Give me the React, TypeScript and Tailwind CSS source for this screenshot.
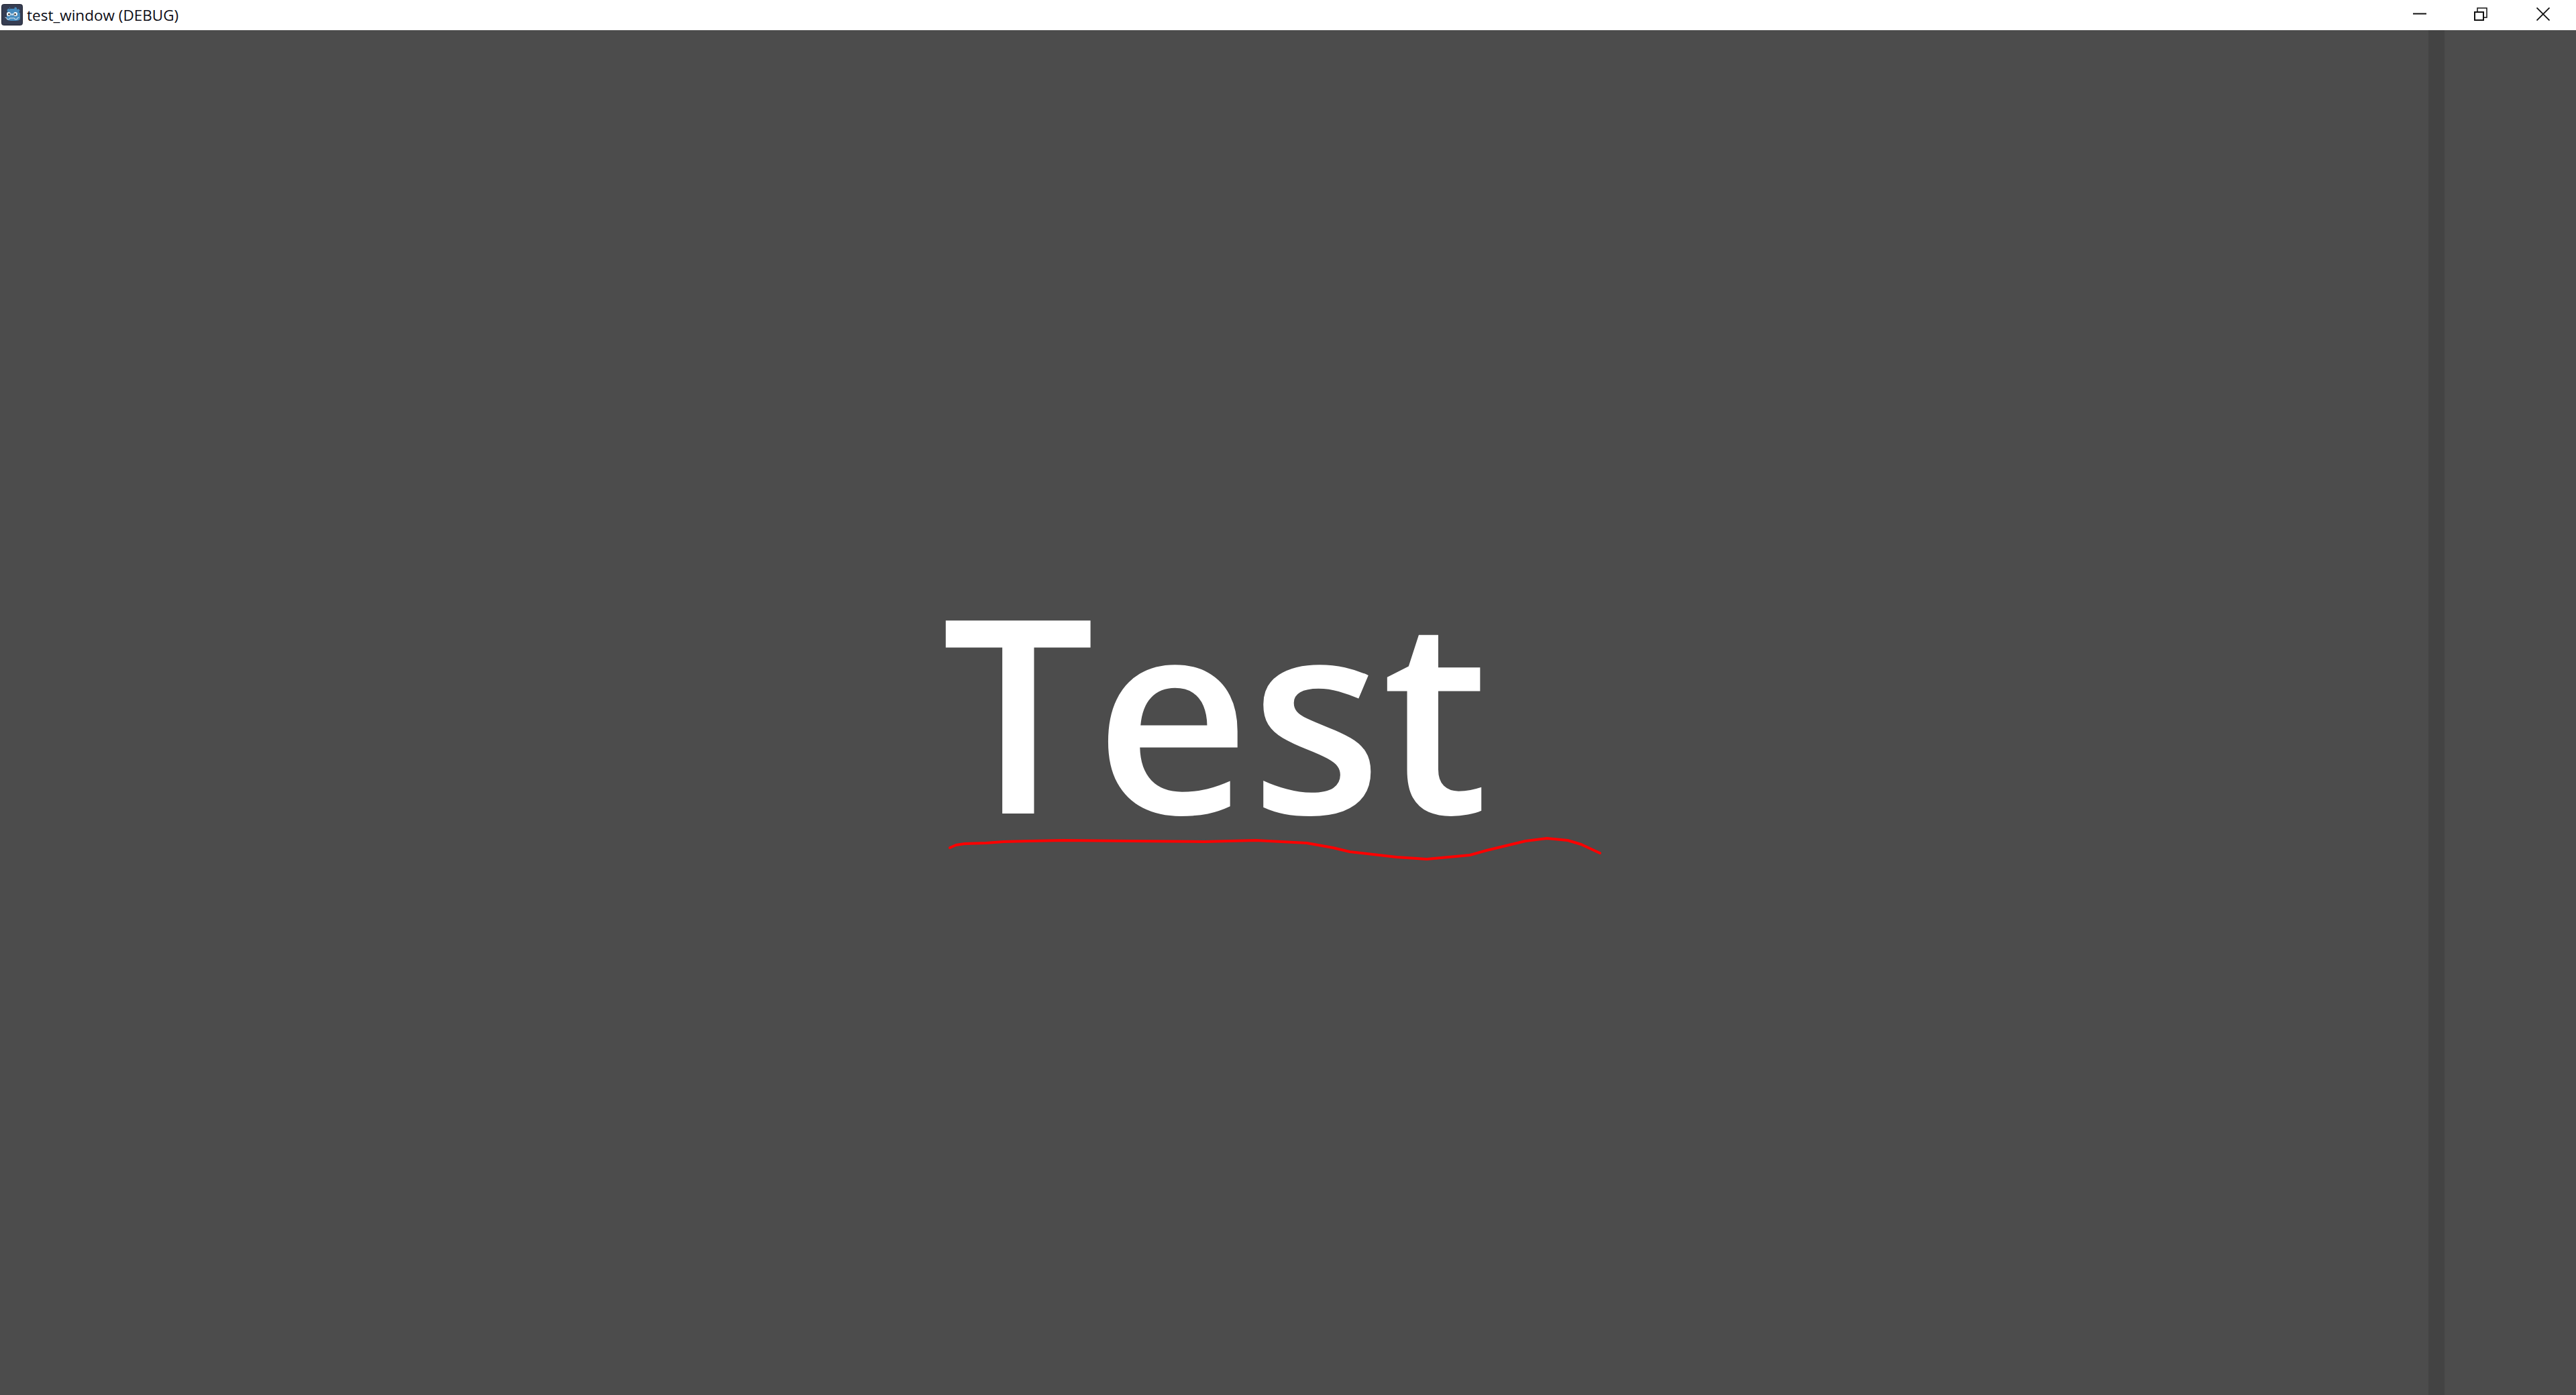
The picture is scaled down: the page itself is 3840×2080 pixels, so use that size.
const linePoints = [
  [1416, 1264], [1425, 1260], [1438, 1258], [1470, 1257], [1496, 1255], [1585, 1253],
  [1687, 1254], [1795, 1255], [1872, 1253], [1948, 1257], [1987, 1264], [2012, 1270],
  [2082, 1278], [2127, 1281], [2191, 1275], [2216, 1268], [2274, 1254], [2306, 1250],
  [2337, 1253], [2357, 1259], [2385, 1272],
];

function GodotIcon() {
  return (
    <svg width="32" height="32" viewBox="0 0 32 32" className="shrink-0">
      <rect x="0.5" y="0.5" width="31" height="31" rx="3" fill="#363d52" stroke="#212532" strokeWidth="1" />
      <path
        d="M12 4.500l.7 2.500h6.600l.7-2.500 3 1 .3 2.700 2.500-1 2 2.500-1.500 2.300 1.700 1.500V21q0 3-3 3.500q-7 1-14 0q-3-.5-3-3.500V13l1.700-1.500-1.500-2.300 2-2.500 2.500 1 .3-2.700z"
        fill="#478cbf"
      />
      <path
        d="M5.500 20l2.500.8.5 2h3.500l.5-1.800h7l.5 1.800h3.500l.5-2 2.500-.8"
        fill="none"
        stroke="#d5e6f2"
        strokeWidth="1"
      />
      <circle cx="11" cy="15" r="3" fill="#fff" />
      <circle cx="21" cy="15" r="3" fill="#fff" />
      <circle cx="11.500" cy="15.200" r="1.500" fill="#414042" />
      <circle cx="20.500" cy="15.200" r="1.500" fill="#414042" />
      <rect x="15" y="14" width="2" height="3" rx="1" fill="#fff" />
    </svg>
  );
}

function WindowButtons() {
  return (
    <div className="flex h-full items-center pb-[4px]">
      <svg width="20" height="20" viewBox="0 0 20 20" className="mr-[71px]">
        <path d="M0 9.500h20" stroke="#111" strokeWidth="2" fill="none" />
      </svg>
      <svg width="20" height="20" viewBox="0 0 20 20" className="mr-[73px]">
        <rect x="1" y="7" width="13" height="12" stroke="#111" strokeWidth="2" fill="none" />
        <path d="M5 6V1h14v14h-4.500" stroke="#111" strokeWidth="1.500" fill="none" />
      </svg>
      <svg width="20" height="20" viewBox="0 0 20 20" className="mr-[39px]">
        <path d="M.5.500l19 19M19.500.500l-19 19" stroke="#111" strokeWidth="1.800" fill="none" />
      </svg>
    </div>
  );
}

export default function App() {
  return (
    <div className="flex h-[2080px] w-[3840px] flex-col overflow-hidden bg-[#4c4c4c]">
      <div className="flex h-[45px] shrink-0 items-center justify-between bg-white">
        <div className="flex items-center gap-[6px] pb-[2px] pl-[2px]">
          <GodotIcon />
          <span className="pt-[3px] font-['Open_Sans',sans-serif] text-[22.500px] leading-none text-[#0b0b14]">
            test_window (DEBUG)
          </span>
        </div>
        <WindowButtons />
      </div>

      <div className="relative flex flex-1">
        <div className="flex-1 pl-[1404px] pt-[810px]">
          <span className="block font-['Open_Sans',sans-serif] text-[403px] font-semibold leading-[403px] text-white">
            Test
          </span>
        </div>
        <div className="w-[24px] bg-[#434343]" />
        <div className="w-[196px]" />

        {/* the drawn line sits over the label */}
        <svg width="3840" height="2035" viewBox="0 45 3840 2035" className="pointer-events-none absolute left-0 top-0">
          <polyline
            points={linePoints.map((p) => p.join(",")).join(" ")}
            fill="none"
            stroke="#ff0000"
            strokeWidth="4"
            strokeLinejoin="round"
            strokeLinecap="round"
          />
        </svg>
      </div>
    </div>
  );
}
